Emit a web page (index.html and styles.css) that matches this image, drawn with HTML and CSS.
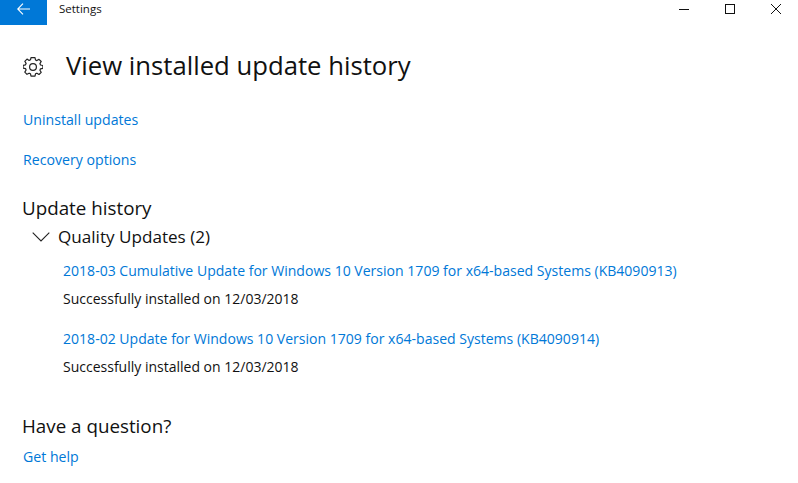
FILE: index.html
```html
<!DOCTYPE html>
<html lang="en">
<head>
<meta charset="utf-8">
<title>Settings</title>
<link rel="stylesheet" href="styles.css">
</head>
<body>
<header class="titlebar">
  <div class="back"><svg width="14" height="12" viewBox="0 0 14 12"><path d="M13 6H1M6 .6 .7 6 6 11.400" fill="none" stroke="#fff" stroke-width="1.100"/></svg></div>
  <div class="apptitle">Settings</div>
  <div class="winctrls">
    <div class="ctrl"><svg width="10" height="10" viewBox="0 0 10 10"><path d="M0 5.500h10" stroke="#111" stroke-width="1"/></svg></div>
    <div class="ctrl"><svg width="10" height="10" viewBox="0 0 10 10"><rect x=".5" y=".5" width="9" height="9" fill="none" stroke="#111"/></svg></div>
    <div class="ctrl"><svg width="10" height="10" viewBox="0 0 10 10"><path d="M0 0l10 10M10 0 0 10" stroke="#111" stroke-width="1" fill="none"/></svg></div>
  </div>
</header>
<main class="content">
  <div class="pagehead">
    <svg class="gear" width="20" height="20" viewBox="0 0 20 20"><path d="M8 .6h4l.5 2.400 1.400.6 2.100-1.300 2.200 2.200-1.300 2.100.6 1.400 2.400.5v2.800l-2.400.5-.6 1.400 1.300 2.100-2.200 2.200-2.100-1.300-1.400.6-.5 2.400H8l-.5-2.400-1.400-.6L4 17.300l-2.200-2.200 1.300-2.100-.6-1.400-2.400-.5V8.300L2.500 7.800l.6-1.400L1.800 4.300 4 2.100l2.100 1.300 1.400-.6z" fill="none" stroke="#222" stroke-width="1.200" stroke-linejoin="round"/><circle cx="10" cy="10" r="3.400" fill="none" stroke="#222" stroke-width="1.200"/></svg>
    <h1>View installed update history</h1>
  </div>
  <nav class="links">
    <a href="#">Uninstall updates</a>
    <a href="#">Recovery options</a>
  </nav>
  <h2 class="history">Update history</h2>
  <div class="group">
    <svg class="chev" width="18" height="10" viewBox="0 0 18 10"><path d="M.7.7 9 9l8.300-8.300" fill="none" stroke="#222" stroke-width="1.100"/></svg>
    <span class="grouptitle">Quality Updates (2)</span>
  </div>
  <ul class="updates">
    <li><a href="#">2018-03 Cumulative Update for Windows 10 Version 1709 for x64-based Systems (KB4090913)</a><p>Successfully installed on 12/03/2018</p></li>
    <li><a href="#">2018-02 Update for Windows 10 Version 1709 for x64-based Systems (KB4090914)</a><p>Successfully installed on 12/03/2018</p></li>
  </ul>
  <h2 class="question">Have a question?</h2>
  <a class="help" href="#">Get help</a>
</main>
</body>
</html>
```
FILE: styles.css
```css
* { box-sizing: border-box; margin: 0; padding: 0; }
html, body { width: 798px; height: 483px; overflow: hidden; background: #fff; }
body { font-family: "Open Sans", "Noto Sans", sans-serif; font-size: 14px; color: #111; }
a { color: #0078d7; text-decoration: none; display: block; }
.titlebar { display: flex; align-items: center; height: 25px; }
.back { width: 47px; height: 25px; background: #0078d7; display: flex; align-items: center; justify-content: center; padding-bottom: 8px; }
.apptitle { margin-left: 12px; font-size: 11.500px; padding-bottom: 9px; }
.winctrls { margin-left: auto; margin-right: -1px; display: flex; padding-bottom: 7px; }
.ctrl { width: 46px; height: 10px; display: flex; justify-content: center; }
.content { padding-left: 21px; }
.pagehead { display: flex; align-items: center; height: 34px; margin-top: 24px; }
.gear { margin-left: 2px; margin-right: 23px; margin-top: 1px; }
h1 { font-size: 25.700px; font-weight: 400; line-height: 34px; color: #111; }
.links { padding-left: 2px; margin-top: 27px; display: flex; flex-direction: column; gap: 20px; font-size: 14.150px; }
.links a { line-height: 20px; }
h2 { font-size: 18.800px; font-weight: 400; line-height: 24px; padding-left: 1px; }
.history { margin-top: 26px; }
.group { display: flex; align-items: center; height: 26px; margin-top: 3px; padding-left: 11px; }
.chev { margin-right: 8px; margin-top: 1px; }
.grouptitle { font-size: 17.100px; }
.updates { list-style: none; padding-left: 42px; margin-top: 12px; }
.updates li { margin-bottom: 20px; }
.updates a, .updates p { line-height: 20px; }
.updates a { font-size: 14.050px; }
.updates p { margin-top: 8px; }
.question { margin-top: 37px; }
.help { padding-left: 2px; margin-top: 9px; line-height: 20px; font-size: 14.150px; }
```
